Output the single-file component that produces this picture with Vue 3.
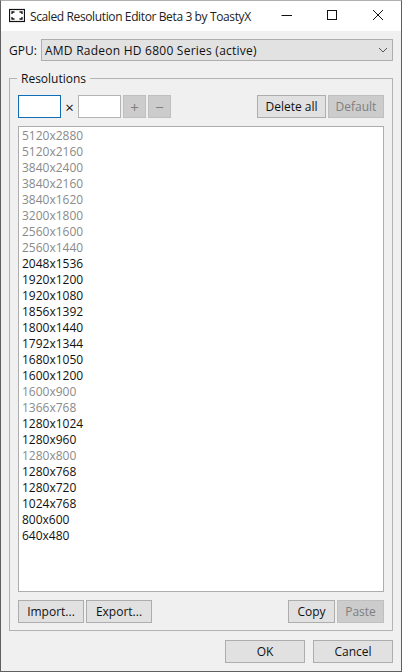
<template>
  <div class="window">
    <!-- title bar -->
    <div class="titlebar">
      <svg class="app-icon" width="16" height="16" viewBox="0 0 16 16" fill="none">
        <rect x="0.5" y="1.5" width="15" height="12" fill="#fff" stroke="#111" stroke-width="1.2" />
        <path d="M3 6V4h2.5M13 6V4h-2.5M3 9v2h2.5M13 9v2h-2.5" stroke="#111" stroke-width="1.3" />
      </svg>
      <span class="title">Scaled Resolution Editor Beta 3 by ToastyX</span>
      <div class="caption">
        <svg width="12" height="12" viewBox="0 0 12 12"><path d="M1.5 6.5h11" stroke="#111" /></svg>
        <svg width="12" height="12" viewBox="0 0 12 12" fill="none"><rect x="1.5" y="1.5" width="9" height="9" stroke="#111" /></svg>
        <svg width="12" height="12" viewBox="0 0 12 12" fill="none"><path d="M1 1l10 10M11 1L1 11" stroke="#111" /></svg>
      </div>
    </div>

    <div class="body">
      <!-- GPU row -->
      <div class="gpu-row">
        <label>GPU:</label>
        <div class="select">
          <span>AMD Radeon HD 6800 Series (active)</span>
          <svg width="10" height="6" viewBox="0 0 10 6" fill="none"><path d="M1 1l4 4 4-4" stroke="#555" /></svg>
        </div>
      </div>

      <!-- Resolutions group -->
      <div class="group">
        <span class="legend">Resolutions</span>
        <div class="toolbar">
          <div class="input focused"></div>
          <span class="times">×</span>
          <div class="input"></div>
          <button class="btn icon-btn disabled">+</button>
          <button class="btn icon-btn disabled">−</button>
          <div class="spacer"></div>
          <button class="btn delete-btn">Delete all</button>
          <button class="btn default-btn disabled">Default</button>
        </div>

        <div class="list">
          <div v-for="r in resolutions" :key="r.text" class="row" :class="{ dim: r.dim }">{{ r.text }}</div>
        </div>

        <div class="bottom-row">
          <button class="btn import-btn">Import...</button>
          <button class="btn import-btn">Export...</button>
          <div class="spacer"></div>
          <button class="btn copy-btn">Copy</button>
          <button class="btn copy-btn disabled">Paste</button>
        </div>
      </div>

      <!-- OK / Cancel -->
      <div class="dialog-row">
        <button class="btn dialog-btn">OK</button>
        <button class="btn dialog-btn">Cancel</button>
      </div>
    </div>
  </div>
</template>

<script setup>
const dimmed = ["5120x2880", "5120x2160", "3840x2400", "3840x2160", "3840x1620", "3200x1800", "2560x1600", "2560x1440", "1600x900", "1366x768", "1280x800"];
const names = [
  "5120x2880", "5120x2160", "3840x2400", "3840x2160", "3840x1620", "3200x1800", "2560x1600", "2560x1440",
  "2048x1536", "1920x1200", "1920x1080", "1856x1392", "1800x1440", "1792x1344", "1680x1050", "1600x1200",
  "1600x900", "1366x768", "1280x1024", "1280x960", "1280x800", "1280x768", "1280x720", "1024x768", "800x600", "640x480"
];
const resolutions = names.map(text => ({ text, dim: dimmed.includes(text) }));
</script>

<style>
html,
body {
  margin: 0;
  background: #f0f0f0;
}
</style>

<style scoped>
.window {
  width: 402px;
  height: 672px;
  box-sizing: border-box;
  border: 1px solid #5f5f5f;
  border-top-color: #b0b0b0;
  background: #f0f0f0;
  display: flex;
  flex-direction: column;
  font-family: "Open Sans", "Noto Sans", sans-serif;
  font-size: 12px;
  color: #111;
  overflow: hidden;
}

/* title bar */
.titlebar {
  height: 30px;
  background: #fff;
  display: flex;
  align-items: center;
  padding-left: 8px;
  flex-shrink: 0;
}

.app-icon {
  margin-right: 5px;
}

.title {
  flex: 1;
  font-size: 12px;
  letter-spacing: -0.38px;
  color: #222;
  white-space: nowrap;
}

.caption {
  display: flex;
  align-items: center;
  gap: 34px;
  padding-right: 17px;
  margin-bottom: 2px;
}

.body {
  flex: 1;
  display: flex;
  flex-direction: column;
  padding: 8px 8px 0 8px;
}

/* GPU select */
.gpu-row {
  display: flex;
  align-items: center;
  height: 22px;
}

.gpu-row label {
  width: 32px;
  font-size: 12px;
}

.select {
  flex: 1;
  height: 22px;
  box-sizing: border-box;
  border: 1px solid #aeaeae;
  background: #e2e2e2;
  display: flex;
  align-items: center;
  justify-content: space-between;
  padding: 0 4px 0 3px;
  letter-spacing: 0.24px;
}

/* group box */
.group {
  position: relative;
  margin-top: 17px;
  height: 553px;
  box-sizing: border-box;
  border: 1px solid #b4b4b4;
  padding: 16px 8px 0 8px;
  display: flex;
  flex-direction: column;
}

.legend {
  position: absolute;
  top: -8px;
  left: 7px;
  padding: 0 4px;
  background: #f0f0f0;
  line-height: 16px;
}

.toolbar,
.bottom-row {
  display: flex;
  height: 23px;
  flex-shrink: 0;
}

.toolbar {
  gap: 2px;
}

.bottom-row {
  gap: 2px;
  margin-top: 8px;
}

.spacer {
  flex: 1;
}

.input {
  width: 43px;
  height: 23px;
  box-sizing: border-box;
  border: 1px solid #b4b4b4;
  background: #fff;
}

.input.focused {
  border-color: #0f6cb5;
}

.times {
  width: 13px;
  text-align: center;
  line-height: 24px;
  font-size: 15px;
}

.btn {
  height: 23px;
  box-sizing: border-box;
  border: 1px solid #adadad;
  background: #e1e1e1;
  font-family: inherit;
  font-size: 12px;
  color: #111;
  padding: 0;
}

.btn.disabled {
  background: #cccccc;
  border-color: #bfbfbf;
  color: #7f7f7f;
}

.icon-btn {
  width: 23px;
  font-size: 15px;
}

.delete-btn {
  width: 69px;
}

.default-btn {
  width: 56px;
}

.import-btn {
  width: 66px;
}

.copy-btn {
  width: 47px;
}

/* resolution list */
.list {
  margin-top: 8px;
  height: 466px;
  box-sizing: border-box;
  border: 1px solid #adadad;
  background: #fff;
  padding: 1px 3px;
  flex-shrink: 0;
}

.row {
  height: 16px;
  line-height: 16px;
}

.row.dim {
  color: #8a8a8a;
}

.dialog-row {
  display: flex;
  justify-content: flex-end;
  gap: 8px;
  margin-top: 9px;
}

.dialog-btn {
  width: 80px;
}
</style>
